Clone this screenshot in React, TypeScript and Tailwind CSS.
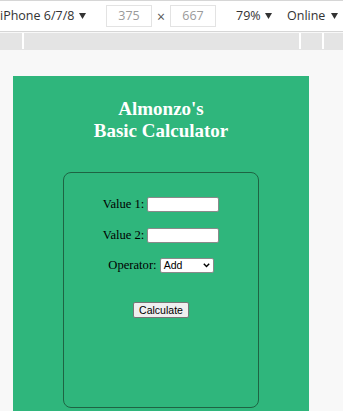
import React from 'react';

const UI_FONT = { fontFamily: '"Open Sans", "DejaVu Sans", sans-serif' };
const SANS = { fontFamily: '"Liberation Sans", Arial, sans-serif' };

function Caret() {
  return (
    <svg width="7" height="6" viewBox="0 0 7 6" className="shrink-0">
      <path d="M0 0 H7 L3.5 6 Z" fill="#333333" />
    </svg>
  );
}

function DeviceToolbar() {
  return (
    <div className="h-[32px] shrink-0 bg-white border-t border-b border-[#d6d6d6] flex items-center text-[12.5px] text-[#333]" style={UI_FONT}>
      <span className="w-[79px] shrink-0 whitespace-nowrap">iPhone 6/7/8</span>
      <Caret />
      <div className="ml-[20px] w-[46px] h-[22px] shrink-0 border border-[#e3e3e3] flex items-center justify-center text-[#9a9a9a]">375</div>
      <span className="w-[18px] shrink-0 text-center text-[14px] text-[#555]">×</span>
      <div className="w-[46px] h-[22px] shrink-0 border border-[#e3e3e3] flex items-center justify-center text-[#9a9a9a]">667</div>
      <span className="ml-[20px] w-[29px] shrink-0">79%</span>
      <Caret />
      <span className="ml-[15px] w-[44px] shrink-0">Online</span>
      <Caret />
    </div>
  );
}

function Ruler() {
  return (
    <div className="mt-[1px] h-[17px] shrink-0 bg-[#e4e4e4] flex">
      <div className="ml-[22px] w-[2px] h-[16px] bg-white" />
      <div className="ml-[275px] w-[2px] h-[16px] bg-white" />
      <div className="ml-[21px] w-[2px] h-[16px] bg-white" />
    </div>
  );
}

function Field({ label }: { label: string }) {
  return (
    <div className="flex items-center justify-center gap-[3px]">
      <span className="text-[12.6px] leading-[15px] text-black">{label}</span>
      <input type="text" className="w-[72px] h-[15px] bg-white border border-[#8a8a8a] rounded-[2px] outline-none" />
    </div>
  );
}

export default function App() {
  return (
    <div className="w-[343px] h-[411px] overflow-hidden bg-[#f8f8f8] flex flex-col">
      <DeviceToolbar />
      <Ruler />
      <div className="mt-[26px] ml-[13px] w-[296px] flex-1 bg-[#2fb67c] pt-[22px] flex flex-col items-center" style={{ fontFamily: '"Liberation Serif", "Times New Roman", serif' }}>
        <h2 className="text-[19px] leading-[22px] font-bold text-white text-center">
          Almonzo's
          <br />
          Basic Calculator
        </h2>
        <div className="mt-[30px] w-[196px] h-[236px] border-[1.5px] border-[#1e6443] rounded-[8px] pt-[24px] flex flex-col items-center">
          <Field label="Value 1:" />
          <div className="mt-[16px]">
            <Field label="Value 2:" />
          </div>
          <div className="mt-[15px] flex items-center justify-center gap-[3px]">
            <span className="text-[12.6px] leading-[15px] text-black">Operator:</span>
            <div
              className="w-[54px] h-[15px] bg-white border border-[#8a8a8a] rounded-[2px] pl-[3px] pr-[3px] flex items-center justify-between text-[10.5px] leading-none text-black"
              style={SANS}
            >
              <span>Add</span>
              <svg width="7" height="5" viewBox="0 0 7 5">
                <path d="M0.8 0.8 L3.5 3.6 L6.2 0.8" fill="none" stroke="#000" strokeWidth="1.4" />
              </svg>
            </div>
          </div>
          <button
            type="button"
            className="mt-[29px] h-[16px] px-[5px] bg-[#efefef] border border-[#767676] rounded-[2px] text-[10.5px] leading-none text-black"
            style={SANS}
          >
            Calculate
          </button>
        </div>
      </div>
    </div>
  );
}
